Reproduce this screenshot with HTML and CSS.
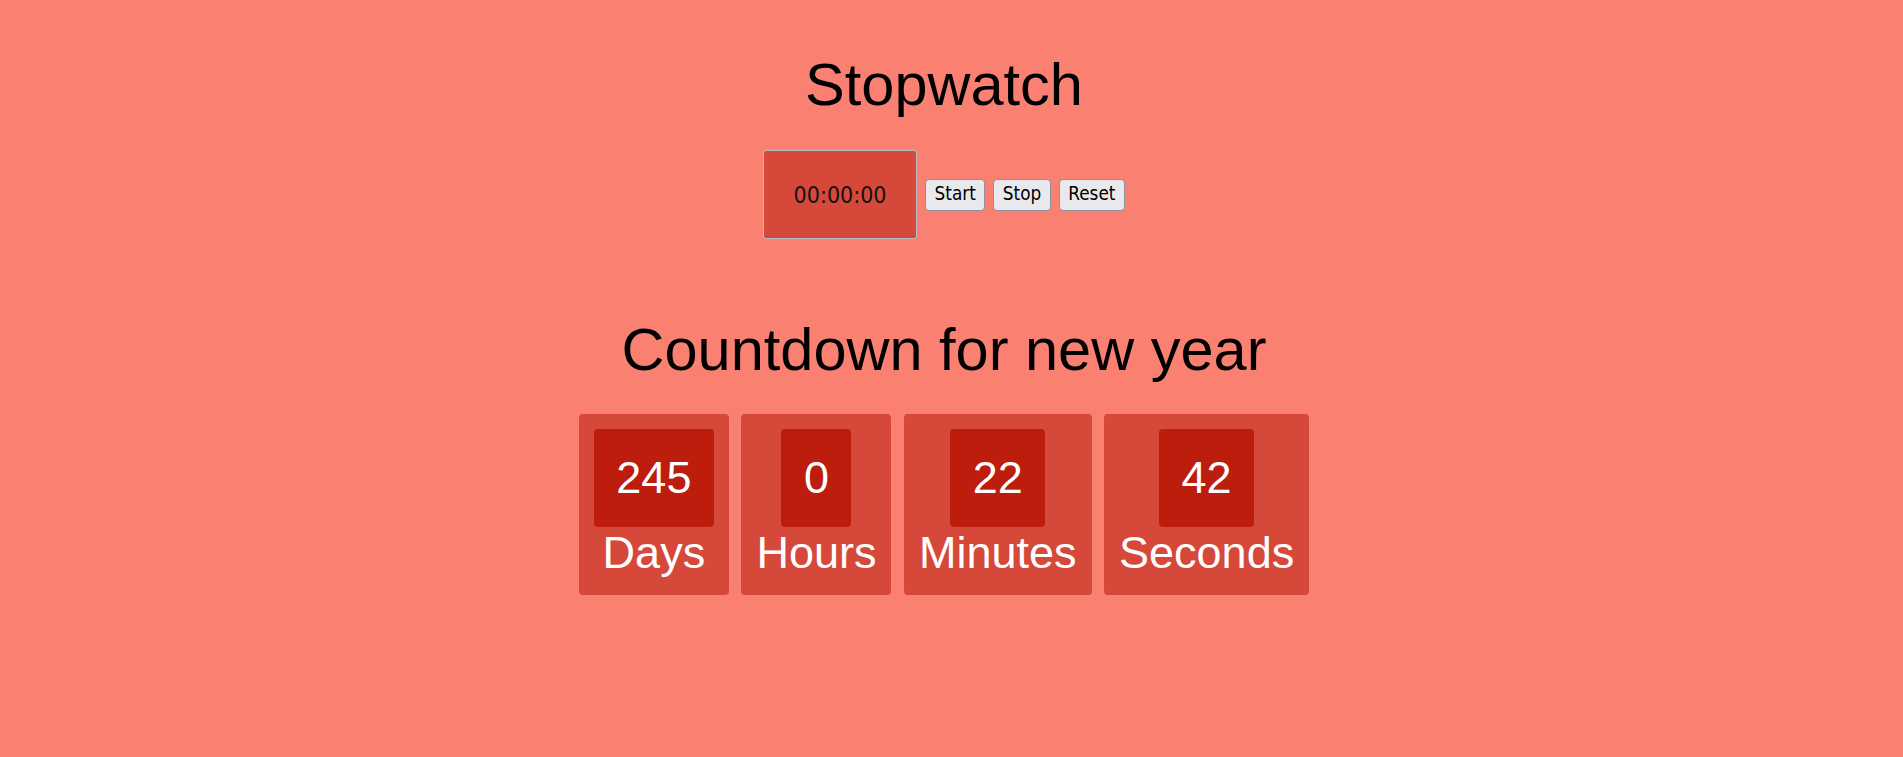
FILE: index.html
```html
<!DOCTYPE html>
<html lang="en">
<head>
<meta charset="utf-8">
<title>Stopwatch &amp; Countdown</title>
<link rel="stylesheet" href="styles.css">
</head>
<body>
<main class="page">
  <section class="stopwatch">
    <h1 class="title">Stopwatch</h1>
    <div class="sw-row">
      <div class="sw-display">00:00:00</div>
      <button class="sw-btn" type="button">Start</button>
      <button class="sw-btn" type="button">Stop</button>
      <button class="sw-btn" type="button">Reset</button>
    </div>
  </section>
  <section class="countdown">
    <h1 class="title">Countdown for new year</h1>
    <div class="cd-row">
      <div class="cd-box"><div class="cd-num">245</div><div class="cd-label">Days</div></div>
      <div class="cd-box"><div class="cd-num">0</div><div class="cd-label">Hours</div></div>
      <div class="cd-box"><div class="cd-num">22</div><div class="cd-label">Minutes</div></div>
      <div class="cd-box"><div class="cd-num">42</div><div class="cd-label">Seconds</div></div>
    </div>
  </section>
</main>
</body>
</html>
```
FILE: styles.css
```css
html, body {
  margin: 0;
  padding: 0;
}
body {
  background: #fa8072;
  font-family: "Liberation Sans", Arial, sans-serif;
  color: #000;
  min-height: 757px;
}
.page {
  display: flex;
  flex-direction: column;
  padding-right: 15px;
}
.title {
  margin: 0;
  font-size: 59.5px;
  line-height: 67px;
  font-weight: normal;
  white-space: nowrap;
}
.stopwatch {
  display: flex;
  flex-direction: column;
  align-items: center;
  padding-top: 51px;
}
.stopwatch .title {
  margin-bottom: 32px;
}
.sw-row {
  display: flex;
  align-items: center;
  gap: 8px;
}
.sw-display {
  box-sizing: border-box;
  width: 154px;
  height: 89px;
  display: flex;
  align-items: center;
  justify-content: center;
  background: #d5483a;
  border: 1px solid #b9bdc6;
  border-radius: 3px;
  font-family: "DejaVu Sans Condensed", "Noto Sans", sans-serif;
  font-size: 23px;
  color: #111;
}
.sw-btn {
  box-sizing: border-box;
  height: 32px;
  padding: 0 8.5px;
  margin: 0;
  border: 1px solid #8f8f9d;
  border-radius: 4px;
  background: #e9e9ed;
  color: #000;
  font-family: "DejaVu Sans Condensed", "Noto Sans", sans-serif;
  font-size: 18.8px;
  line-height: 1;
}
.countdown {
  display: flex;
  flex-direction: column;
  align-items: center;
  margin-top: 77px;
}
.countdown .title {
  margin-bottom: 31px;
}
.cd-row {
  display: flex;
  gap: 12.5px;
}
.cd-box {
  display: flex;
  flex-direction: column;
  align-items: center;
  padding: 15px 15px 16px;
  background: #d5483a;
  border-radius: 4px;
  color: #fff;
}
.cd-num {
  background: #bc1d0c;
  border-radius: 4px;
  padding: 24px 22.5px;
  font-size: 45px;
  line-height: 50px;
}
.cd-label {
  font-size: 45px;
  line-height: 52px;
  white-space: nowrap;
}
```
